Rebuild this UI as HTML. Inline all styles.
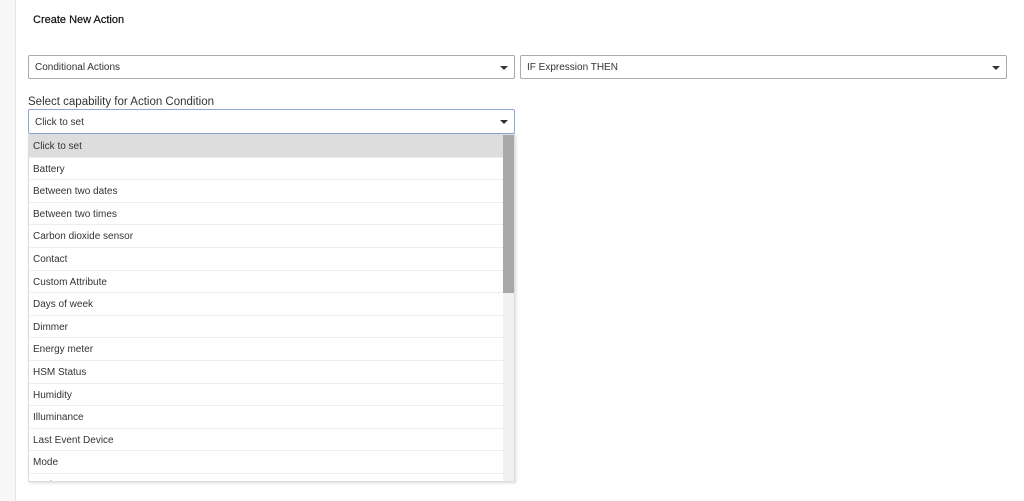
<!DOCTYPE html>
<html><head><style>
body{margin:0;width:1024px;height:501px;background:#fff;font-family:"Liberation Sans",sans-serif;position:relative;overflow:hidden}
.side{position:absolute;left:0;top:0;width:15px;height:501px;background:#f7f7f7;border-right:1px solid #e6e6e6}
.t{position:absolute;left:33px;top:14px;font-size:11px;color:#111;font-weight:500;-webkit-text-stroke:0.2px #111}
.sel{position:absolute;height:23px;border:1px solid #aaa;border-radius:2px;font-size:10px;color:#333;line-height:23px;padding-left:6px;box-sizing:border-box;background:#fff}
.sel:after{content:"";position:absolute;right:6px;top:10px;border-left:4px solid transparent;border-right:4px solid transparent;border-top:4px solid #333}
.lbl{position:absolute;left:28px;top:96px;font-size:11.5px;color:#333}
.list{position:absolute;left:28px;top:134px;width:487px;height:348px;border:1px solid #ddd;box-sizing:border-box;box-shadow:1px 1px 3px rgba(0,0,0,.15);overflow:hidden}
.row{height:22.6px;line-height:24px;font-size:10px;color:#333;padding-left:4px;border-bottom:1px solid #eee;box-sizing:border-box;width:475px}
.row.h{background:#ddd}
.sb{position:absolute;right:0;top:0;width:11px;height:100%;background:#f0f0f0}
.th{position:absolute;right:0;top:0;width:11px;height:158px;background:#a8a8a8}
</style></head><body>
<div class="side"></div>
<div class="t">Create New Action</div>
<div class="sel" style="left:28px;top:55px;width:487px;height:24px;line-height:24px">Conditional Actions</div>
<div class="sel" style="left:520px;top:55px;width:487px;height:24px;line-height:24px">IF Expression THEN</div>
<div class="lbl">Select capability for Action Condition</div>
<div class="sel" style="left:28px;top:109px;width:487px;height:25px;line-height:25px;border-color:#8fa6d6">Click to set</div>
<div class="list">
<div class="row h">Click to set</div><div class="row">Battery</div><div class="row">Between two dates</div><div class="row">Between two times</div><div class="row">Carbon dioxide sensor</div><div class="row">Contact</div><div class="row">Custom Attribute</div><div class="row">Days of week</div><div class="row">Dimmer</div><div class="row">Energy meter</div><div class="row">HSM Status</div><div class="row">Humidity</div><div class="row">Illuminance</div><div class="row">Last Event Device</div><div class="row">Mode</div><div class="row">Motion</div>
<div class="sb"><div class="th"></div></div>
</div>
</body></html>
